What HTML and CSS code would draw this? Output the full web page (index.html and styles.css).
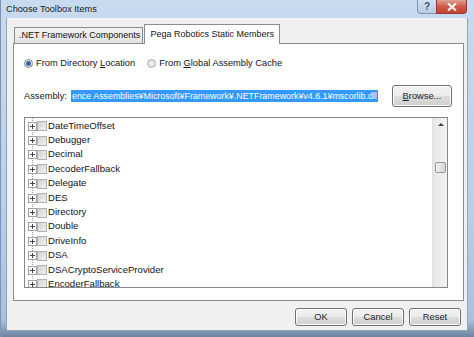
FILE: index.html
```html
<!DOCTYPE html>
<html lang="en">
  <head>
    <meta charset="UTF-8" />
    <title>Choose Toolbox Items</title>
    <link rel="stylesheet" href="styles.css">
  </head>
  <body>
    <div class="window">
      <div class="titlebar">
        <span class="title">Choose Toolbox Items</span>
        <div class="caption-buttons">
          <span class="cap-btn cap-help">?</span>
          <span class="cap-btn cap-close">
            <svg width="10" height="8" viewBox="0 0 10 8"><path d="M1 0.5 L9 7.5 M9 0.5 L1 7.5" stroke="#fff" stroke-width="2"/></svg>
          </span>
        </div>
      </div>
      <div class="client">
        <div class="tabs">
          <div class="tab">.NET Framework Components</div>
          <div class="tab active">Pega Robotics Static Members</div>
        </div>
        <div class="panel">
          <div class="radios">
            <label class="radio"><span class="radio-dot checked"></span><span>From Directory <u>L</u>ocation</span></label>
            <label class="radio"><span class="radio-dot"></span><span>From <u>G</u>lobal Assembly Cache</span></label>
          </div>
          <div class="assembly-row">
            <span class="assembly-label">Assembly:</span>
            <div class="assembly-field"><span class="selected">ence Assemblies¥Microsoft¥Framework¥.NETFramework¥v4.6.1¥mscorlib.dll</span></div>
            <button class="btn browse"><u>B</u>rowse...</button>
          </div>
          <div class="tree">
            <ul class="items">
              <li><span class="expander"></span><span class="check"></span>DateTimeOffset</li>
              <li><span class="expander"></span><span class="check"></span>Debugger</li>
              <li><span class="expander"></span><span class="check"></span>Decimal</li>
              <li><span class="expander"></span><span class="check"></span>DecoderFallback</li>
              <li><span class="expander"></span><span class="check"></span>Delegate</li>
              <li><span class="expander"></span><span class="check"></span>DES</li>
              <li><span class="expander"></span><span class="check"></span>Directory</li>
              <li><span class="expander"></span><span class="check"></span>Double</li>
              <li><span class="expander"></span><span class="check"></span>DriveInfo</li>
              <li><span class="expander"></span><span class="check"></span>DSA</li>
              <li><span class="expander"></span><span class="check"></span>DSACryptoServiceProvider</li>
              <li><span class="expander"></span><span class="check"></span>EncoderFallback</li>
            </ul>
            <div class="scrollbar">
              <span class="arrow-up"></span>
              <span class="thumb"></span>
            </div>
          </div>
        </div>
        <div class="footer">
          <button class="btn">OK</button>
          <button class="btn">Cancel</button>
          <button class="btn">Reset</button>
        </div>
      </div>
    </div>
  </body>
</html>
```

FILE: styles.css
```css
* {
  box-sizing: border-box;
}
body {
  margin: 0;
  font-family: "Liberation Sans", Arial, sans-serif;
  font-size: 9.3px;
  color: #141414;
  background: #5f7594;
}
.window {
  width: 474px;
  height: 337px;
  display: flex;
  flex-direction: column;
  padding: 0 6px 6px 5px;
  background: linear-gradient(#c8daee, #b9d0e9 60%, #a9c1de 95%, #6d829f);
  border-left: 1px solid #7d93b0;
}
.titlebar {
  height: 18px;
  display: flex;
  align-items: flex-start;
  justify-content: space-between;
}
.title {
  line-height: 18px;
  font-size: 9.2px;
  color: #1c1c1c;
}
.caption-buttons {
  display: flex;
  margin-right: 1px;
}
.cap-btn {
  height: 14px;
  display: flex;
  align-items: center;
  justify-content: center;
  border: 1px solid #8096b1;
  border-top: none;
}
.cap-help {
  width: 19px;
  border-radius: 0 0 0 4px;
  border-right: none;
  background: linear-gradient(#d3e1f0, #b8cbe1);
  color: #43556e;
  font-size: 10px;
  font-weight: bold;
}
.cap-close {
  width: 31px;
  border-radius: 0 0 4px 0;
  background: linear-gradient(#e0a197, #cf5a48 50%, #c7412f);
  border-color: #8d3b33;
}
.client {
  flex: 1;
  display: flex;
  flex-direction: column;
  background: #f0f0f0;
  padding: 7px 3px 0 6px;
  border: 1px solid #8ea3bd;
  border-top: none;
}
.tabs {
  display: flex;
  align-items: flex-end;
  height: 18px;
  padding-left: 1px;
}
.tab {
  height: 16px;
  padding: 0 2px 0 4px;
  font-size: 9px;
  line-height: 14px;
  border: 1px solid #898c95;
  border-bottom: none;
  background: linear-gradient(#f2f2f2, #e3e3e3);
  white-space: nowrap;
}
.tab.active {
  height: 20px;
  margin-bottom: -1px;
  margin-left: 1px;
  padding: 0 5px;
  line-height: 18px;
  background: #fff;
  position: relative;
  z-index: 1;
}
.panel {
  height: 258px;
  border: 1px solid #898c95;
  background: #fff;
  padding: 12px 0 0 10px;
}
.radios {
  display: flex;
  gap: 12px;
  height: 14px;
  align-items: center;
}
.radio {
  display: flex;
  align-items: center;
  gap: 3px;
}
.radio-dot {
  width: 9px;
  height: 9px;
  border-radius: 50%;
  border: 1px solid #a9adb4;
  background: radial-gradient(#f4f4f4, #d6d6d6);
}
.radio-dot.checked {
  background: radial-gradient(circle, #2a4f86 0, #3d6db0 2px, #e6eaef 3px);
  border-color: #7b8592;
}
.assembly-row {
  display: flex;
  align-items: center;
  height: 22px;
  margin-top: 15px;
}
.assembly-label {
  width: 47px;
  flex: none;
}
.assembly-field {
  width: 313px;
  flex: none;
  overflow: hidden;
  white-space: nowrap;
}
.selected {
  background: #3399ff;
  color: #fff;
  padding: 0 1px;
  font-size: 8.9px;
  line-height: 12px;
  display: inline-block;
}
.btn {
  font: inherit;
  color: #1e1e1e;
  border: 1px solid #707070;
  border-radius: 3px;
  background: linear-gradient(#f2f2f2 0, #ebebeb 50%, #dddddd 51%, #cfcfcf);
  box-shadow: inset 0 0 0 1px #fcfcfc;
  padding: 0;
}
.browse {
  width: 60px;
  height: 22px;
  margin-left: 8px;
}
.tree {
  display: flex;
  width: 424px;
  height: 171px;
  margin-top: 10px;
  border: 1px solid #828790;
  overflow: hidden;
}
.items {
  flex: 1;
  list-style: none;
  margin: 0;
  padding: 0 0 0 3px;
  position: relative;
}
.items::before {
  content: "";
  position: absolute;
  left: 7px;
  top: 0;
  bottom: 0;
  border-left: 1px dotted #a0a0a0;
}
.items li {
  height: 14.4px;
  display: flex;
  align-items: center;
  white-space: nowrap;
  font-size: 9.6px;
}
.expander {
  width: 9px;
  height: 9px;
  margin-top: 2px;
  border: 1px solid #a0a0a0;
  background: #fff;
  position: relative;
  z-index: 1;
}
.expander::before,
.expander::after {
  content: "";
  position: absolute;
  background: #444;
}
.expander::before {
  left: 1px;
  top: 3px;
  width: 5px;
  height: 1px;
}
.expander::after {
  left: 3px;
  top: 1px;
  width: 1px;
  height: 5px;
}
.check {
  width: 10px;
  height: 10px;
  margin: 2px 1px 0 0;
  border: 1px solid #b2b2b2;
  background: linear-gradient(135deg, #d2d2d2, #f2f2f2);
}
.scrollbar {
  width: 15px;
  position: relative;
  background: linear-gradient(90deg, #e6e6e6, #f4f4f4);
  border-left: 1px solid #e0e0e0;
}
.arrow-up {
  position: absolute;
  left: 5px;
  top: 5px;
  border: 3px solid transparent;
  border-bottom: 3px solid #404040;
  border-top: none;
}
.thumb {
  position: absolute;
  left: 2px;
  top: 44px;
  width: 11px;
  height: 11px;
  border: 1px solid #979797;
  border-radius: 2px;
  background: linear-gradient(90deg, #f1f1f1, #d7d7d7);
}
.footer {
  display: flex;
  justify-content: flex-end;
  gap: 5px;
  padding: 7px 3px 0 0;
}
.footer .btn {
  width: 52px;
  height: 18px;
}
```
